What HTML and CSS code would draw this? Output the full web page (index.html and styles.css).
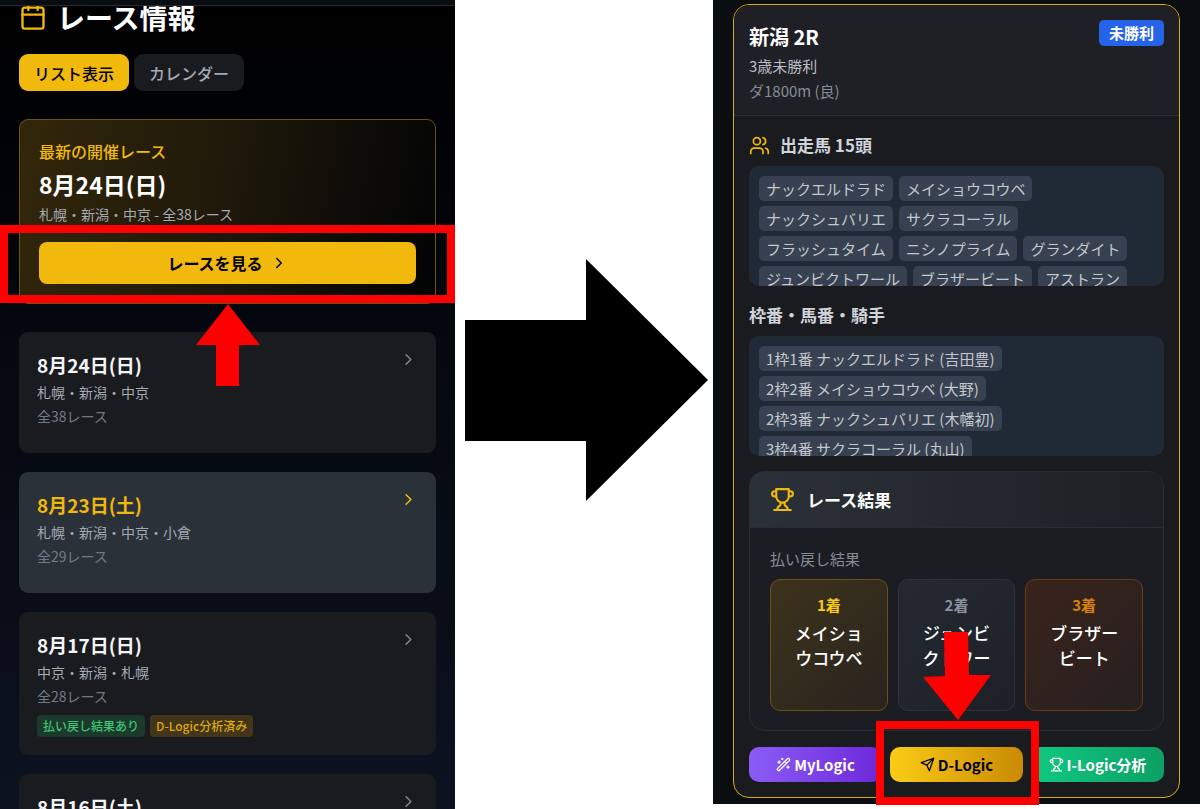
FILE: index.html
```html
<!DOCTYPE html>
<html lang="ja">
<head>
  <meta charset="UTF-8">
  <meta name="viewport" content="width=device-width, initial-scale=1.0">
  <title>レース情報</title>
  <link rel="stylesheet" href="styles.css">
</head>
<body>

  <!-- Race list -->
  <section class="panel list-panel">
    <div class="topbar"></div>
    <div class="page-title">
      <svg class="icon" width="28" height="28" viewBox="0 0 24 24"><rect x="3" y="4" width="18" height="18" rx="2"/><path d="M8 2v4M16 2v4M3 10h18"/></svg>
      <h1>レース情報</h1>
    </div>

    <div class="tabs">
      <button class="tab active">リスト表示</button>
      <button class="tab">カレンダー</button>
    </div>

    <div class="hero">
      <p class="hero-label">最新の開催レース</p>
      <h2>8月24日(日)</h2>
      <p class="places">札幌・新潟・中京 - 全38レース</p>
      <div class="hero-action">
        <button class="hero-button">レースを見る
          <svg class="icon" width="18" height="18" viewBox="0 0 24 24"><path d="m9 18 6-6-6-6"/></svg>
        </button>
        <div class="frame frame-wide"></div>
        <svg class="arrow-up" width="64" height="82" viewBox="0 0 64 82"><path d="M32 0 64 41H43V82H20V41H0Z"/></svg>
      </div>
    </div>

    <div class="days">
      <a class="day" href="#">
        <div>
          <h3>8月24日(日)</h3>
          <p class="places">札幌・新潟・中京</p>
          <p class="count">全38レース</p>
          <div class="tags"></div>
        </div>
        <svg class="icon" width="19" height="19" viewBox="0 0 24 24"><path d="m9 18 6-6-6-6"/></svg>
      </a>
      <a class="day selected" href="#">
        <div>
          <h3>8月23日(土)</h3>
          <p class="places">札幌・新潟・中京・小倉</p>
          <p class="count">全29レース</p>
          <div class="tags"></div>
        </div>
        <svg class="icon" width="19" height="19" viewBox="0 0 24 24"><path d="m9 18 6-6-6-6"/></svg>
      </a>
      <a class="day" href="#">
        <div>
          <h3>8月17日(日)</h3>
          <p class="places">中京・新潟・札幌</p>
          <p class="count">全28レース</p>
          <div class="tags">
            <span class="tag green">払い戻し結果あり</span>
            <span class="tag yellow">D-Logic分析済み</span>
          </div>
        </div>
        <svg class="icon" width="19" height="19" viewBox="0 0 24 24"><path d="m9 18 6-6-6-6"/></svg>
      </a>
      <a class="day" href="#">
        <div>
          <h3>8月16日(土)</h3>
        </div>
        <svg class="icon" width="19" height="19" viewBox="0 0 24 24"><path d="m9 18 6-6-6-6"/></svg>
      </a>
    </div>
  </section>

  <!-- Big arrow between the two screens -->
  <div class="between">
    <svg viewBox="0 0 243 242"><path d="M0 61H121V0L243 121 121 242V182H0Z"/></svg>
  </div>

  <!-- Race detail -->
  <section class="panel detail-panel">
    <article class="race">
      <header class="race-head">
        <div>
          <h2>新潟 2R</h2>
          <p class="race-name">3歳未勝利</p>
          <p class="race-course">ダ1800m (良)</p>
        </div>
        <span class="badge">未勝利</span>
      </header>

      <div class="race-body">
        <h3 class="section-title">
          <svg class="icon" width="21" height="21" viewBox="0 0 24 24"><path d="M16 21v-2a4 4 0 0 0-4-4H6a4 4 0 0 0-4 4v2"/><circle cx="9" cy="7" r="4"/><path d="M22 21v-2a4 4 0 0 0-3-3.870M16 3.130a4 4 0 0 1 0 7.750"/></svg>
          出走馬 15頭
        </h3>
        <div class="chips">
          <span class="chip">ナックエルドラド</span>
          <span class="chip">メイショウコウベ</span>
          <span class="chip">ナックシュバリエ</span>
          <span class="chip">サクラコーラル</span>
          <span class="chip">フラッシュタイム</span>
          <span class="chip">ニシノプライム</span>
          <span class="chip">グランダイト</span>
          <span class="chip">ジュンビクトワール</span>
          <span class="chip">ブラザービート</span>
          <span class="chip">アストラン</span>
        </div>

        <h3 class="section-title">枠番・馬番・騎手</h3>
        <div class="chips column">
          <span class="chip">1枠1番 ナックエルドラド (吉田豊)</span>
          <span class="chip">2枠2番 メイショウコウベ (大野)</span>
          <span class="chip">2枠3番 ナックシュバリエ (木幡初)</span>
          <span class="chip">3枠4番 サクラコーラル (丸山)</span>
        </div>

        <div class="result">
          <h3 class="result-head">
            <svg class="icon" width="25" height="25" viewBox="0 0 24 24"><path d="M6 9H4.500a2.500 2.500 0 0 1 0-5H6M18 9h1.500a2.500 2.500 0 0 0 0-5H18M4 22h16M10 14.660V17c0 .55-.47.98-.97 1.210C7.850 18.750 7 20.240 7 22M14 14.660V17c0 .55.47.98.97 1.210C16.150 18.750 17 20.240 17 22M18 2H6v7a6 6 0 0 0 12 0V2Z"/></svg>
            レース結果
          </h3>
          <div class="result-body">
            <p class="result-label">払い戻し結果</p>
            <div class="places-grid">
              <div class="place first">
                <b>1着</b>
                <p>メイショウコウベ</p>
              </div>
              <div class="place second">
                <b>2着</b>
                <p>ジュンビクトワール</p>
              </div>
              <div class="place third">
                <b>3着</b>
                <p>ブラザービート</p>
              </div>
            </div>
          </div>
        </div>

        <div class="actions">
          <button class="action purple">
            <svg class="icon" width="15" height="15" viewBox="0 0 24 24"><path d="m21.640 3.640-1.280-1.280a1.200 1.200 0 0 0-1.720 0L2.360 18.640a1.200 1.200 0 0 0 0 1.720l1.280 1.280a1.200 1.200 0 0 0 1.720 0L21.640 5.360a1.200 1.200 0 0 0 0-1.720M14 7l3 3M5 6v4M19 14v4M10 2v2M7 8H3M21 16h-4M11 3H9"/></svg>
            MyLogic
          </button>
          <div class="action-marked">
            <button class="action gold">
              <svg class="icon" width="15" height="15" viewBox="0 0 24 24"><path d="M22 2 15 22 11 13 2 9ZM22 2 11 13"/></svg>
              D-Logic
            </button>
            <div class="frame frame-small"></div>
            <svg class="arrow-down" width="68" height="88" viewBox="0 0 68 88"><path d="M21 0H45L46 43H68L35 88 0 45 22 44Z"/></svg>
          </div>
          <button class="action emerald">
            <svg class="icon" width="15" height="15" viewBox="0 0 24 24"><path d="M6 9H4.500a2.500 2.500 0 0 1 0-5H6M18 9h1.500a2.500 2.500 0 0 0 0-5H18M4 22h16M10 14.660V17c0 .55-.47.98-.97 1.210C7.850 18.750 7 20.240 7 22M14 14.660V17c0 .55.47.98.97 1.210C16.150 18.750 17 20.240 17 22M18 2H6v7a6 6 0 0 0 12 0V2Z"/></svg>
            I-Logic分析
          </button>
        </div>
      </div>
    </article>
  </section>

</body>
</html>
```
FILE: styles.css
```css
* {
  box-sizing: border-box;
}

body {
  margin: 0;
  height: 100vh;
  overflow: hidden;
  display: grid;
  grid-template-columns: 455fr 258fr 487fr;
  align-items: start;
  background: #fff;
  color: #fff;
  font-family: "Noto Sans CJK JP", sans-serif;
}

h1, h2, h3, p {
  margin: 0;
}

button {
  border: none;
  font-family: inherit;
  cursor: pointer;
}

.icon {
  flex: none;
  fill: none;
  stroke: currentColor;
  stroke-width: 2;
  stroke-linecap: round;
  stroke-linejoin: round;
}

/* Race list */
.list-panel {
  height: 100vh;
  overflow: hidden;
  padding: 0 19px;
  background: linear-gradient(#000 0%, #010205 15%, #050911 50%, #0c1220 100%);
}

.topbar {
  position: relative;
  z-index: 1;
  height: 6px;
  margin: 0 -19px -6px;
  background: #0b0e11;
  border-bottom: 1px solid #252b38;
}

.page-title {
  display: flex;
  align-items: center;
  gap: 10px;
  height: 34px;
  margin-bottom: 20px;
}

.page-title .icon {
  color: #f0b90b;
}

.page-title h1 {
  font-size: 28px;
  line-height: 34px;
}

.tabs {
  display: flex;
  gap: 5px;
  margin-bottom: 28px;
}

.tab {
  padding: 0 15px;
  height: 37px;
  border-radius: 9px;
  background: #1a1b1f;
  color: #a3a9b5;
  font-size: 16px;
  font-weight: 500;
}

.tab.active {
  background: #f0b90b;
  color: #000;
}

.hero {
  padding: 20px 19px 19px;
  margin-bottom: 28px;
  border: 1px solid #6d540e;
  border-radius: 9px;
  background: linear-gradient(100deg, #33270a, #1d180a 50%, #020305);
}

.hero-label {
  margin-bottom: 4px;
  color: #f0b90b;
  font-size: 16px;
  font-weight: 500;
  line-height: 23px;
}

.hero h2 {
  margin-bottom: 2px;
  font-size: 23px;
  line-height: 34px;
}

.places {
  color: #a3a9b5;
  font-size: 14px;
  line-height: 23px;
}

.hero-action {
  position: relative;
  margin-top: 16px;
}

.hero-button {
  display: flex;
  align-items: center;
  justify-content: center;
  gap: 7px;
  width: 100%;
  height: 42px;
  border-radius: 8px;
  background: #f0b90b;
  color: #000;
  font-size: 16px;
  font-weight: 700;
}

.days {
  display: flex;
  flex-direction: column;
  gap: 19px;
}

.day {
  display: flex;
  justify-content: space-between;
  padding: 18px;
  border-radius: 9px;
  background: #1a1b1f;
  color: #f3f4f6;
  text-decoration: none;
}

.day h3 {
  margin-bottom: 2px;
  font-size: 19px;
  line-height: 29px;
}

.day .icon {
  color: #7e8591;
}

.day.selected {
  background: #2b3139;
}

.day.selected h3,
.day.selected .icon {
  color: #f0b90b;
}

.count {
  color: #737a87;
  font-size: 14px;
  line-height: 24px;
}

.tags {
  display: flex;
  gap: 5px;
  margin-top: 7px;
}

.tag {
  padding: 0 6px;
  border-radius: 4px;
  font-size: 12px;
  font-weight: 500;
  line-height: 22px;
}

.tag.green {
  background: #1b3a2b;
  color: #3fc476;
}

.tag.yellow {
  background: #42351a;
  color: #dfa80c;
}

/* Red marks */
.frame {
  position: absolute;
  border: 8px solid #f00;
  pointer-events: none;
}

.frame-wide {
  inset: -17px -39px -19px;
}

.frame-small {
  inset: -26px -16px -23px -14px;
}

.arrow-up,
.arrow-down {
  position: absolute;
  left: 50%;
  transform: translateX(-50%);
  fill: #f00;
}

.arrow-up {
  top: 62px;
}

.arrow-down {
  bottom: 62px;
}

.between {
  padding: 32vh 5px 0 10px;
}

.between svg {
  display: block;
  width: 100%;
}

/* Race detail */
.detail-panel {
  padding: 4px 20px 6px;
  background: #0b0e11;
}

.race {
  border: 1px solid #dcaa0d;
  border-radius: 16px;
  background: #1a1b1f;
}

.race-head {
  display: flex;
  justify-content: space-between;
  align-items: flex-start;
  padding: 15px 15px 12px;
  border-bottom: 1px solid #2b3139;
  border-radius: 15px 15px 0 0;
  background: #1f2025;
}

.race-head h2 {
  font-size: 20px;
  line-height: 33px;
}

.race-name,
.race-course {
  color: #b7bcc5;
  font-size: 15px;
  line-height: 25px;
}

.race-course {
  color: #868c97;
}

.badge {
  padding: 0 10px;
  border-radius: 5px;
  background: #2563eb;
  font-size: 15px;
  font-weight: 700;
  line-height: 26px;
}

.race-body {
  padding: 15px;
}

.section-title {
  display: flex;
  align-items: center;
  gap: 10px;
  margin-bottom: 7px;
  color: #d1d5db;
  font-size: 17px;
  line-height: 28px;
}

.section-title .icon {
  color: #f0b90b;
}

.chips {
  display: flex;
  flex-wrap: wrap;
  align-content: flex-start;
  gap: 5px 6px;
  height: 120px;
  padding: 10px;
  margin-bottom: 15px;
  overflow: hidden;
  border-radius: 10px;
  background: #1f2a36;
}

.chips.column {
  flex-direction: column;
  flex-wrap: nowrap;
  align-items: flex-start;
}

.chip {
  flex: none;
  padding: 0 7px;
  border-radius: 5px;
  background: #374151;
  color: #c5c8cd;
  font-size: 15px;
  line-height: 25px;
}

.result {
  margin-bottom: 16px;
  overflow: hidden;
  border: 1px solid #272d35;
  border-radius: 15px;
  background: #1c1d22;
}

.result-head {
  display: flex;
  align-items: center;
  gap: 12px;
  height: 56px;
  padding: 0 20px;
  border-bottom: 1px solid #272d35;
  background: linear-gradient(90deg, #2b3139, #1e1f24);
  font-size: 17px;
}

.result-head .icon {
  color: #f0b90b;
}

.result-body {
  padding: 19px 20px;
}

.result-label {
  margin-bottom: 9px;
  color: #868c97;
  font-size: 15px;
  line-height: 23px;
}

.places-grid {
  display: grid;
  grid-template-columns: repeat(3, 1fr);
  gap: 10px;
}

.place {
  padding: 13px 20px 15px;
  border: 1px solid;
  border-radius: 10px;
  text-align: center;
}

.place b {
  display: block;
  margin-bottom: 4px;
  font-size: 15px;
  line-height: 23px;
}

.place p {
  font-size: 17px;
  font-weight: 500;
  line-height: 25px;
}

.place.first {
  border-color: #6a5112;
  background: linear-gradient(135deg, #3d321b, #29241f);
}

.place.second {
  border-color: #2c333c;
  background: linear-gradient(135deg, #242932, #1d2026);
}

.place.third {
  border-color: #6b3a12;
  background: linear-gradient(135deg, #3a241c, #271f20);
}

.place.first b {
  color: #facc15;
}

.place.second b {
  color: #8b919d;
}

.place.third b {
  color: #d98207;
}

.actions {
  display: grid;
  grid-template-columns: repeat(3, 1fr);
  gap: 8px;
}

.action {
  display: flex;
  align-items: center;
  justify-content: center;
  gap: 3px;
  width: 100%;
  height: 35px;
  padding: 0;
  border-radius: 10px;
  color: #fff;
  font-size: 15px;
  font-weight: 700;
}

.action.purple {
  background: linear-gradient(90deg, #8b5cf6, #6d28d9);
}

.action.gold {
  background: linear-gradient(90deg, #facc15, #ca8a04);
  color: #000;
}

.action.emerald {
  background: linear-gradient(90deg, #10c981, #0c9f65);
}

.action-marked {
  position: relative;
}
```
